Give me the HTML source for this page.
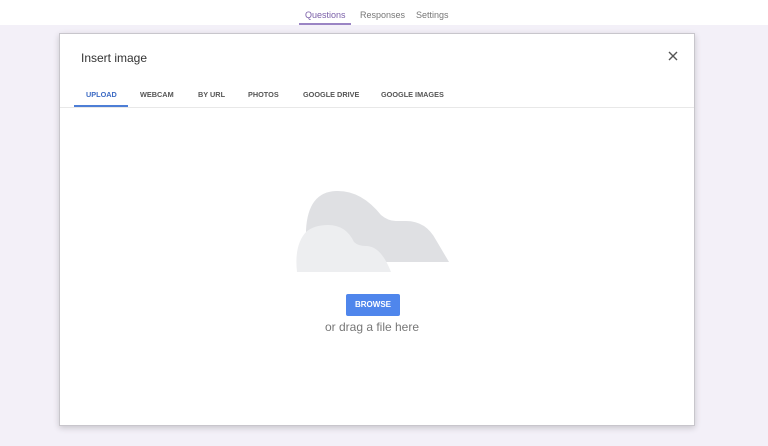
<!DOCTYPE html>
<html><head><meta charset="utf-8"><style>
*{margin:0;padding:0;box-sizing:border-box}
body{width:768px;height:446px;overflow:hidden;background:#f3f0f8;font-family:"Liberation Sans",Arial,sans-serif;position:relative}
.top{position:absolute;left:0;top:0;width:768px;height:25px;background:#fff}
.nav{position:absolute;top:10px;font-size:9px;color:#777}
.dlg{position:absolute;left:59px;top:33px;width:636px;height:393px;background:#fff;border:1px solid #c8c6cc;box-shadow:0 2px 6px rgba(0,0,0,.18)}
.title{position:absolute;left:21px;top:17px;font-size:12px;color:#333}
.x{position:absolute;left:607px;top:16px}
.tab{position:absolute;top:56px;font-size:7.3px;font-weight:bold;color:#555}
.line{position:absolute;left:0;top:73px;width:634px;height:1px;background:#e8e8e8}
.ul{position:absolute;left:14px;top:71px;width:54px;height:2px;background:#4d7ed6}
.btn{position:absolute;left:286px;top:260px;width:54px;height:22px;background:#4f86ec;border-radius:2px;color:#fff;font-size:8px;font-weight:bold;text-align:center;line-height:22px}
.drag{position:absolute;left:-5px;width:634px;text-align:center;top:286px;font-size:12px;color:#777}
</style></head><body>
<div class="top"></div>
<div class="nav" style="left:305px;color:#7a5fa8">Questions</div>
<div style="position:absolute;left:299px;top:23px;width:52px;height:2px;background:#9a84c4"></div>
<div class="nav" style="left:360px">Responses</div>
<div class="nav" style="left:416px">Settings</div>
<div class="dlg">
<div class="title">Insert image</div>
<svg class="x" width="12" height="12" viewBox="0 0 12 12"><path d="M2 2L10 10M10 2L2 10" stroke="#555" stroke-width="1.4"/></svg>
<div class="tab" style="left:26px;color:#3d6bc4">UPLOAD</div>
<div class="tab" style="left:80px">WEBCAM</div>
<div class="tab" style="left:138px">BY URL</div>
<div class="tab" style="left:188px">PHOTOS</div>
<div class="tab" style="left:243px">GOOGLE DRIVE</div>
<div class="tab" style="left:321px">GOOGLE IMAGES</div>
<div class="ul"></div><div class="line"></div>
<svg style="position:absolute;left:236px;top:156px" width="160" height="86" viewBox="0 0 160 86">
<path d="M10 72 L10 40 Q12 2 40 1 Q65 0 85 25 Q92 31 100 31 L110 31 Q130 31 140 50 L153 72 Z" fill="#dfe0e3"/>
<path d="M1 82 Q-2 55 10 42 Q18 35 32 35 Q50 35 58 52 Q62 56 70 56 Q85 56 95 82 Z" fill="#edeef0"/>
</svg>
<div class="btn">BROWSE</div>
<div class="drag">or drag a file here</div>
</div>
</body></html>
